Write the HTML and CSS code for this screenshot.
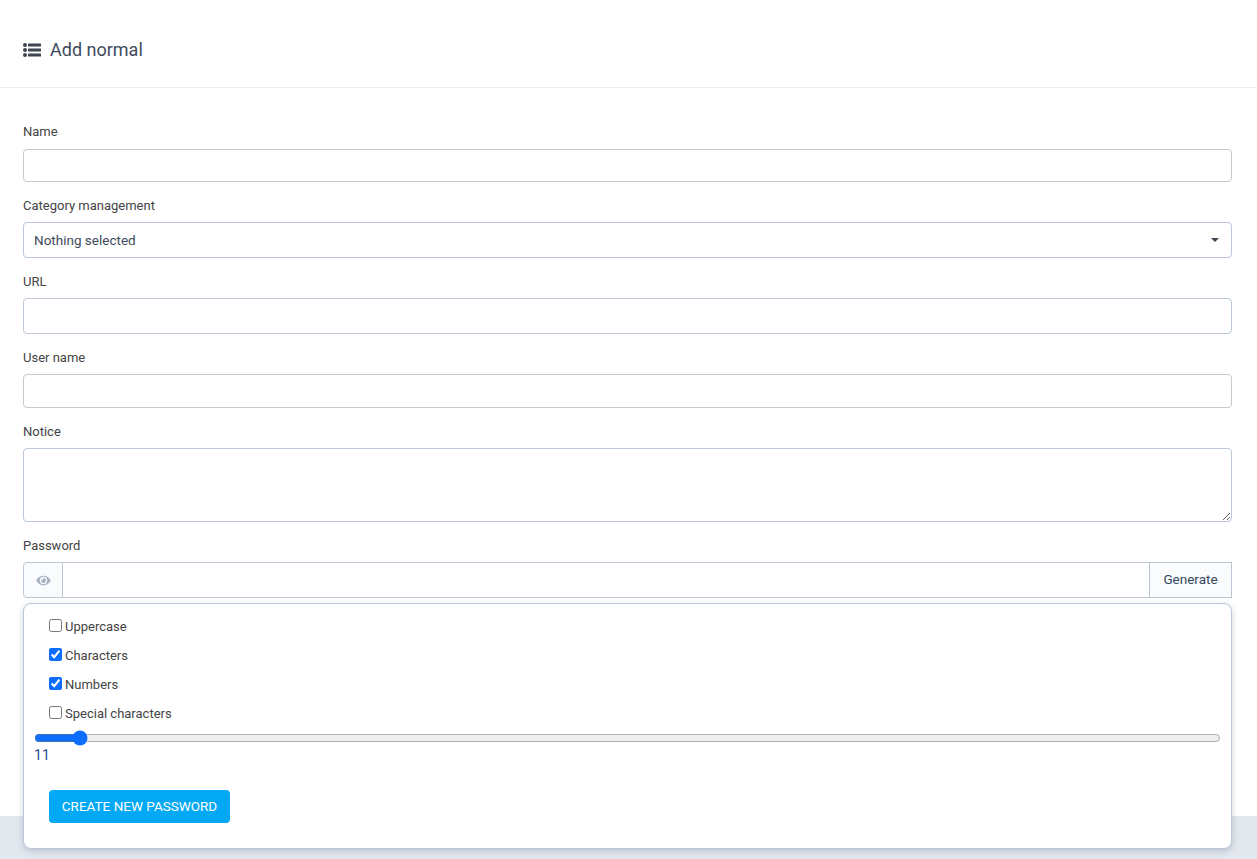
FILE: index.html
```html
<!DOCTYPE html>
<html lang="en">
<head>
    <meta charset="UTF-8">
    <meta name="viewport" content="width=device-width, initial-scale=1.0">
    <title>Add normal</title>
    <link rel="stylesheet" href="styles.css">
</head>
<body>
    <div class="card">
        <div class="card-header">
            <svg class="list-icon" viewBox="0 0 18 14" width="18" height="14">
                <circle cx="2" cy="2" r="2"/>
                <circle cx="2" cy="7" r="2"/>
                <circle cx="2" cy="12" r="2"/>
                <rect x="5" y="0.4" width="13" height="3.2" rx="0.5"/>
                <rect x="5" y="5.4" width="13" height="3.2" rx="0.5"/>
                <rect x="5" y="10.4" width="13" height="3.2" rx="0.5"/>
            </svg>
            <h1>Add normal</h1>
        </div>
        <form class="card-body">
            <div class="form-group">
                <label for="name">Name</label>
                <input type="text" id="name" class="form-control input-plain">
            </div>
            <div class="form-group">
                <label>Category management</label>
                <div class="select-box">
                    <span>Nothing selected</span>
                    <span class="caret"></span>
                </div>
            </div>
            <div class="form-group">
                <label for="url">URL</label>
                <input type="text" id="url" class="form-control">
            </div>
            <div class="form-group">
                <label for="username">User name</label>
                <input type="text" id="username" class="form-control input-plain input-tall">
            </div>
            <div class="form-group">
                <label for="notice">Notice</label>
                <textarea id="notice" class="form-control notice"></textarea>
            </div>
            <div class="form-group password-group">
                <label for="password">Password</label>
                <div class="input-group">
                    <span class="addon addon-eye">
                        <svg viewBox="0 0 576 512" width="15" height="13">
                            <path d="M572.5 241.4C518.3 135.6 410.9 64 288 64S57.7 135.6 3.5 241.4a32.4 32.4 0 0 0 0 29.2C57.7 376.4 165.1 448 288 448s230.3-71.6 284.5-177.4a32.4 32.4 0 0 0 0-29.2zM288 400a144 144 0 1 1 144-144 143.900 143.900 0 0 1-144 144zm0-240a95.300 95.300 0 0 0-25.300 3.800 47.900 47.900 0 0 1-66.900 66.900A95.800 95.800 0 1 0 288 160z"/>
                        </svg>
                    </span>
                    <input type="text" id="password" class="group-input">
                    <button type="button" class="addon addon-btn">Generate</button>
                </div>
                <div class="generator">
                    <label class="check"><input type="checkbox"> Uppercase</label>
                    <label class="check"><input type="checkbox" checked> Characters</label>
                    <label class="check"><input type="checkbox" checked> Numbers</label>
                    <label class="check"><input type="checkbox"> Special characters</label>
                    <input type="range" class="length-range" min="10" max="41" value="11">
                    <div class="length-value">11</div>
                    <button type="button" class="btn-create">Create new password</button>
                </div>
            </div>
        </form>
    </div>
</body>
</html>
```

FILE: styles.css
```css
* {
    box-sizing: border-box;
}

body {
    margin: 0;
    height: 859px;
    overflow: hidden;
    background-color: #e3e7ee;
    font-family: Roboto, sans-serif;
    font-size: 13px;
    color: #3e4b5b;
}

.card {
    height: 816px;
    background-color: #fff;
}

/* Header */
.card-header {
    display: flex;
    align-items: center;
    gap: 9px;
    height: 88px;
    padding: 12px 23px 0;
    border-bottom: 1px solid #eceef1;
}

.list-icon {
    fill: #3e4651;
}

.card-header h1 {
    margin: 0;
    font-size: 18px;
    font-weight: 400;
    color: #3e4b5b;
}

/* Form */
.card-body {
    padding: 34px 25px 0 23px;
}

.form-group {
    margin-bottom: 13px;
}

.form-group > label {
    display: block;
    height: 20px;
    margin-bottom: 7px;
    line-height: 20px;
    color: #444;
}

.form-group + .form-group > label {
    line-height: 22px;
}

.form-control {
    display: block;
    width: 100%;
    height: 36px;
    padding: 0 10px;
    border: 1px solid #bcc8d8;
    border-radius: 4px;
    background-color: #fff;
    outline: none;
}

.input-plain {
    height: 33px;
    border-color: #c6c9cd;
}

.input-tall {
    height: 34px;
}

.notice {
    height: 74px;
    resize: vertical;
}

.select-box {
    display: flex;
    justify-content: space-between;
    align-items: center;
    height: 36px;
    padding: 0 12px 0 10px;
    border: 1px solid #bcc8d8;
    border-radius: 4px;
    font-size: 13.5px;
    color: #3e4b5b;
}

.caret {
    border-top: 4px solid #3e4651;
    border-left: 4px solid transparent;
    border-right: 4px solid transparent;
}

/* Password */
.password-group {
    position: relative;
}

.input-group {
    display: flex;
    height: 36px;
}

.addon {
    display: flex;
    align-items: center;
    justify-content: center;
    border: 1px solid #bcc8d8;
    background-color: #f9fbfd;
}

.addon-eye {
    width: 40px;
    border-radius: 4px 0 0 4px;
    fill: #a9b3c1;
}

.group-input {
    flex: 1;
    min-width: 0;
    border: 1px solid #bcc8d8;
    border-left: 0;
    border-right: 0;
    outline: none;
}

.addon-btn {
    width: 83px;
    padding: 0 0 2px;
    font-family: Roboto, sans-serif;
    font-size: 13.5px;
    color: #34495e;
}

.generator {
    position: absolute;
    top: 68px;
    left: 0;
    right: 0;
    height: 246px;
    padding: 8px 10px 0;
    border: 1px solid #bcc8d8;
    border-radius: 8px;
    background-color: #fff;
    box-shadow: 0 2px 6px rgba(90, 110, 140, 0.3);
}

.check {
    display: flex;
    align-items: center;
    height: 29px;
    padding-left: 15px;
    color: #444;
}

.check input {
    width: 13px;
    height: 13px;
    margin: 0 3px 3px 0;
    accent-color: #0d6efd;
}

.length-range {
    display: block;
    width: 100%;
    height: 16px;
    margin: 2px 0 0;
    accent-color: #0d6efd;
}

.length-value {
    font-size: 14px;
    line-height: 18px;
    letter-spacing: 0.2px;
    color: #2c4a86;
}

.btn-create {
    display: block;
    width: 181px;
    height: 33px;
    margin: 26px 0 0 15px;
    padding: 0 0 2px;
    border: none;
    border-radius: 4px;
    background-color: #03a9f4;
    font-family: Roboto, sans-serif;
    font-size: 13.5px;
    font-weight: 400;
    color: #fff;
    text-transform: uppercase;
}
```
